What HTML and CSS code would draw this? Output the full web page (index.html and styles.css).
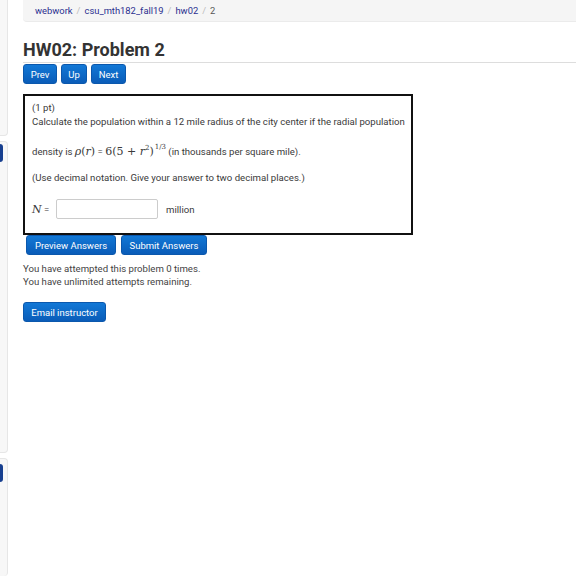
FILE: index.html
```html
<!DOCTYPE html>
<html>
<head>
<meta charset="utf-8">
<link rel="stylesheet" href="styles.css">
</head>
<body>
<div class="layout">
  <div class="sidebar">
    <div class="panel p1"></div>
    <div class="panel p2"><span class="tab"></span></div>
    <div class="panel p3"><span class="tab"></span></div>
  </div>
  <div class="main">
    <div class="crumbs">
      <a class="crumb">webwork</a><span class="sep">/</span><a class="crumb">csu_mth182_fall19</a><span class="sep">/</span><a class="crumb">hw02</a><span class="sep">/</span><span class="cur">2</span>
    </div>
    <h1 class="title">HW02: Problem 2</h1>
    <div class="nav">
      <span class="btn">Prev</span><span class="btn">Up</span><span class="btn">Next</span>
    </div>
    <div class="problem">
      <div class="line">(1 pt)</div>
      <div class="line">Calculate the population within a 12 mile radius of the city center if the radial population</div>
      <div class="line gap">density is <span class="math"><i>ρ</i>(<i>r</i>)</span> = <span class="math">6(5 + <i>r</i><sup>2</sup>)<sup class="hi">1/3</sup></span> (in thousands per square mile).</div>
      <div class="line gap2">(Use decimal notation. Give your answer to two decimal places.)</div>
      <div class="answer"><span class="math"><i>N</i></span> = <span class="input"></span> million</div>
    </div>
    <div class="submit">
      <span class="btn">Preview Answers</span><span class="btn">Submit Answers</span>
    </div>
    <div class="attempts">
      <div>You have attempted this problem 0 times.</div>
      <div>You have unlimited attempts remaining.</div>
    </div>
    <span class="btn email">Email instructor</span>
  </div>
</div>
</body>
</html>
```

FILE: styles.css
```css
html, body { margin: 0; padding: 0; background: #fff; }
body { font-family: Roboto, "Liberation Sans", sans-serif; color: #333; overflow: hidden; height: 576px; }
.layout { display: flex; height: 576px; }
.sidebar { width: 8px; display: flex; flex-direction: column; gap: 5px; }
.panel { background: #f7f7f7; border-right: 1px solid #e6e6e6; border-bottom: 1px solid #e6e6e6; border-top: 1px solid #e6e6e6; border-radius: 0 4px 4px 0; box-sizing: border-box; position: relative; }
.p1 { height: 136px; border-top: none; border-radius: 0 0 4px 0; }
.p2 { height: 312px; padding-top: 2px; }
.p3 { flex: 1; padding-top: 5px; border-bottom: none; }
.tab { display: block; width: 3px; height: 18px; background: #173f8f; border-radius: 0 3px 3px 0; }
.main { flex: 1; padding-left: 15px; min-width: 0; }
.crumbs { height: 22px; box-sizing: border-box; background: #f5f5f5; border-bottom: 1px solid #ebebeb; border-radius: 0 0 0 4px; padding: 5px 12px; font-size: 9.4px; white-space: nowrap; }
.crumb { color: #2a2f8f; }
.sep { color: #bbb; padding: 0 4px; }
.cur { color: #555; }
.title { margin: 17px 0 0; font-size: 18px; font-weight: 700; color: #333; line-height: 22px; padding-bottom: 1px; border-bottom: 1px solid #ddd; }
.nav { display: flex; gap: 4px; margin-top: 1px; }
.btn { display: inline-block; background: linear-gradient(#1278d6, #0a5cb8); color: #fff; font-size: 9.5px; line-height: 19px; height: 20px; padding: 0 9px; border-radius: 3px; border: 1px solid #0b58ad; box-sizing: border-box; white-space: nowrap; }
.nav .btn:nth-child(1) { width: 34px; text-align: center; padding: 0; }
.nav .btn:nth-child(2) { width: 26px; text-align: center; padding: 0; }
.nav .btn:nth-child(3) { width: 35px; text-align: center; padding: 0; }
.problem { margin-top: 10px; width: 390px; height: 141px; box-sizing: border-box; border: 2px solid #111; padding: 5px 7px; font-size: 9.6px; color: #3a3a3a; }
.line { line-height: 14px; white-space: nowrap; }
.gap { margin-top: 16px; }
.gap2 { margin-top: 12px; }
.math { font-family: "DejaVu Serif", "Liberation Serif", serif; font-size: 11px; }
.math sup { font-size: 7px; line-height: 0; }
.math sup.hi { vertical-align: 6px; margin-left: 1px; }
.answer { display: flex; align-items: center; margin-top: 14px; white-space: pre; }
.input { display: inline-block; width: 102px; height: 20px; box-sizing: border-box; border: 1px solid #ccc; border-radius: 2px; margin: 0 6px 0 4px; background: #fff; }
.submit { display: flex; gap: 5px; margin-left: 3px; }
.submit .btn:nth-child(1) { width: 90px; text-align: center; padding: 0; }
.submit .btn:nth-child(2) { width: 86px; text-align: center; padding: 0; }
.attempts { margin-top: 7px; font-size: 9.6px; line-height: 13px; color: #444; }
.email { margin-top: 14px; width: 83px; text-align: center; padding: 0; }
```
